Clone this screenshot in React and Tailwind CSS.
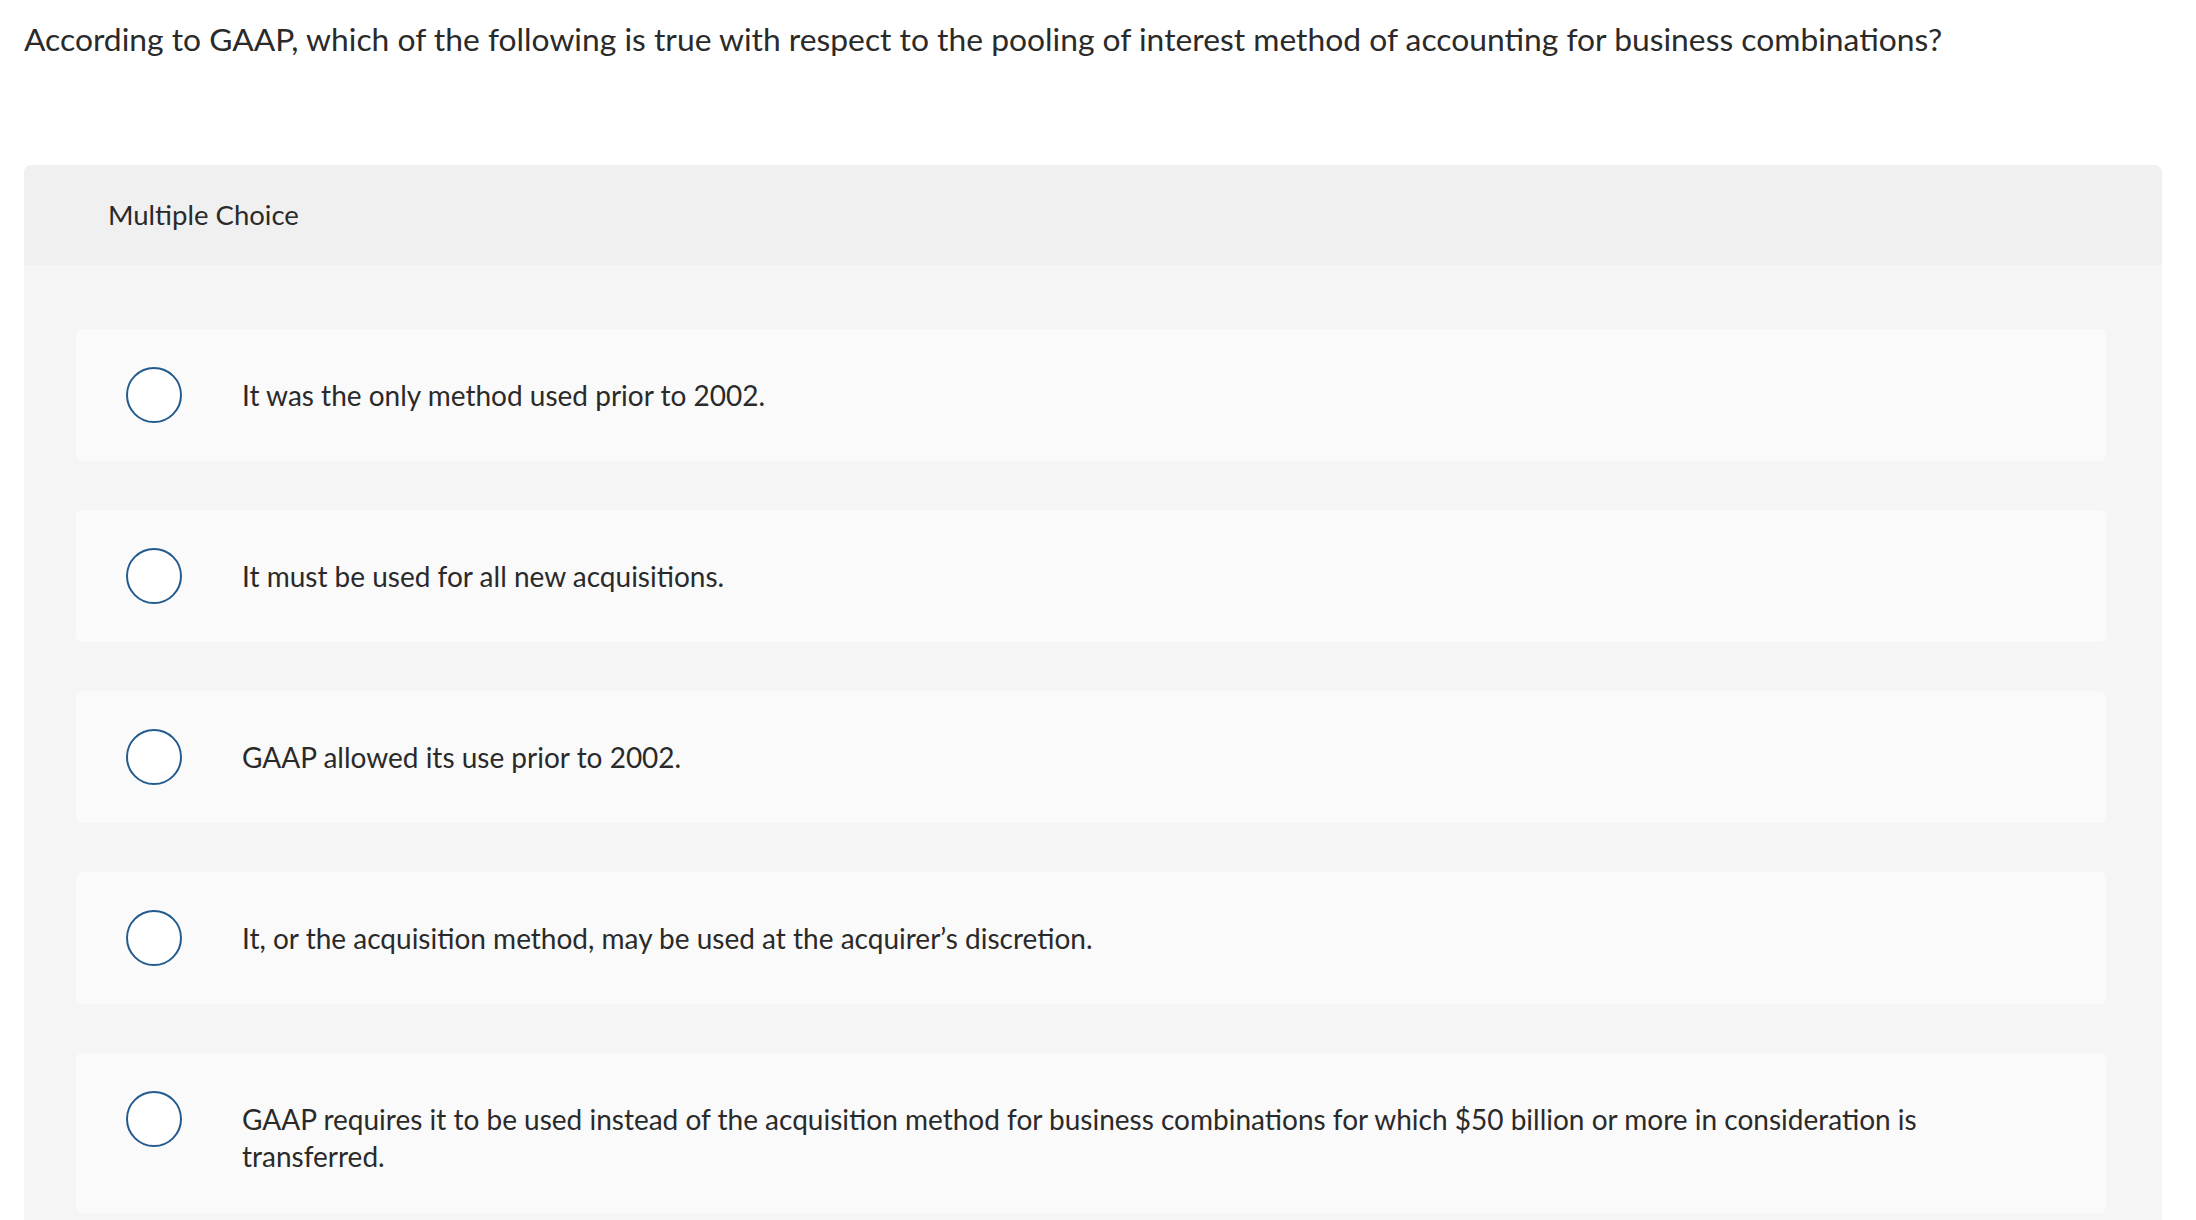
import React from 'react';

const options = [
  'It was the only method used prior to 2002.',
  'It must be used for all new acquisitions.',
  'GAAP allowed its use prior to 2002.',
  'It, or the acquisition method, may be used at the acquirer\u2019s discretion.',
  'GAAP requires it to be used instead of the acquisition method for business combinations for which $50 billion or more in consideration is transferred.',
];

const Option = ({ text }) => (
  <div className="flex items-start rounded-[6px] bg-[#fafafa] pl-[50px] pr-[80px] py-[38px]">
    <div className="h-[56px] w-[56px] shrink-0 rounded-full border-[2.5px] border-[#245b8f] bg-white" />
    <div className="ml-[60px] mt-[10px] max-w-[1740px] text-[28px] leading-[37px] text-[#2a2a2a]">{text}</div>
  </div>
);

const App = () => {
  return (
    <div className="min-h-screen bg-white font-['Lato',sans-serif] text-[#2a2a2a]">
      <div className="px-[24px] pt-[19px]">
        <p className="text-[31.8px] leading-[40px]">
          According to GAAP, which of the following is true with respect to the pooling of interest method of accounting for business combinations?
        </p>
      </div>

      <div className="mx-[24px] mt-[106px] w-[2138px] overflow-hidden rounded-t-[8px] bg-[#f5f5f5]">
        <div className="flex h-[100px] items-center bg-[#f0f0f0] px-[84px]">
          <span className="text-[27.5px]">Multiple Choice</span>
        </div>
        <div className="flex flex-col gap-[49px] px-[52px] pt-[64px] pb-[40px] pr-[56px]">
          {options.map((opt, i) => (
            <Option key={i} text={opt} />
          ))}
        </div>
      </div>
    </div>
  );
};

export default App;
